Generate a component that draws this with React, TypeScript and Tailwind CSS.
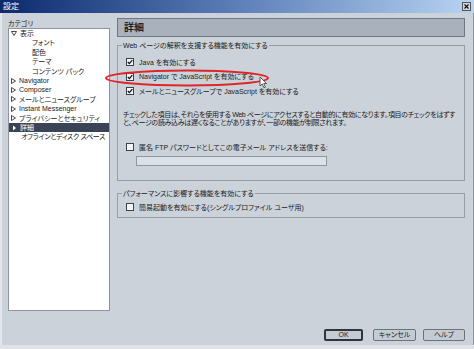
import React from "react";

type Node = { label: string; level: number; arrow?: "down" | "right"; selected?: boolean };

const tree: Node[] = [
  { label: "表示", level: 0, arrow: "down" },
  { label: "フォント", level: 1 },
  { label: "配色", level: 1 },
  { label: "テーマ", level: 1 },
  { label: "コンテンツ パック", level: 1 },
  { label: "Navigator", level: 0, arrow: "right" },
  { label: "Composer", level: 0, arrow: "right" },
  { label: "メールとニュースグループ", level: 0, arrow: "right" },
  { label: "Instant Messenger", level: 0, arrow: "right" },
  { label: "プライバシーとセキュリティ", level: 0, arrow: "right" },
  { label: "詳細", level: 0, arrow: "right", selected: true },
  { label: "オフラインとディスク スペース", level: 0 },
];

const Arrow = ({ dir, selected }: { dir: "down" | "right"; selected?: boolean }) => {
  if (selected) {
    return (
      <svg width="5" height="6" viewBox="0 0 5 6" className="shrink-0">
        <path d="M1 0.5 L4 3 L1 5.5 Z" fill="#ffffff" />
      </svg>
    );
  }
  return dir === "down" ? (
    <svg width="6" height="5" viewBox="0 0 6 5" className="shrink-0">
      <path d="M0.5 0.5 H5.5 L3 4.5 Z" fill="none" stroke="#333" strokeWidth="0.9" />
    </svg>
  ) : (
    <svg width="5" height="6" viewBox="0 0 5 6" className="shrink-0">
      <path d="M0.5 0.5 L4.5 3 L0.5 5.5 Z" fill="none" stroke="#333" strokeWidth="0.9" />
    </svg>
  );
};

const CheckBox = ({ checked }: { checked?: boolean }) => (
  <span className="w-[8px] h-[8px] border border-[#3c4249] bg-[#f2f4f6] flex items-center justify-center shrink-0">
    {checked && (
      <svg width="6" height="6" viewBox="0 0 6 6">
        <path d="M0.8 3 L2.4 4.6 L5.3 1.2" fill="none" stroke="#111" strokeWidth="1.3" />
      </svg>
    )}
  </span>
);

const CheckRow = ({ checked, children }: { checked?: boolean; children: React.ReactNode }) => (
  <div className="flex items-center gap-[5px] h-[9px] leading-[9px] ml-[8px]">
    <CheckBox checked={checked} />
    <span className="whitespace-nowrap">{children}</span>
  </div>
);

const Btn = ({ w, primary, children }: { w: string; primary?: boolean; children: React.ReactNode }) => (
  <button
    className={
      "h-[12px] rounded-[2px] bg-[#c4cbd3] text-[7px] leading-[10px] text-[#222] flex items-center justify-center " +
      w +
      (primary ? " border-2 border-[#2f343a]" : " border border-[#6b727b]")
    }
  >
    {children}
  </button>
);

export default function App() {
  return (
    <div
      className="relative w-[474px] h-[349px] overflow-hidden bg-[#cbd2da] text-[#1b1b1b] text-[7px] [font-feature-settings:'palt']"
      style={{ fontFamily: '"Liberation Sans", "Noto Sans CJK JP", sans-serif' }}
    >
      {/* title bar */}
      <div className="h-[13px] flex items-center justify-between px-[3px] bg-gradient-to-r from-[#0c2a6e] via-[#5d7fb8] to-[#b8d4f2]">
        <span className="text-white text-[8px] leading-[10px]">設定</span>
        <span className="w-[9px] h-[9px] bg-[#d4d8dd] border border-[#555] flex items-center justify-center">
          <svg width="5" height="5" viewBox="0 0 5 5">
            <path d="M0.5 0.5 L4.5 4.5 M4.5 0.5 L0.5 4.5" stroke="#111" strokeWidth="1.2" />
          </svg>
        </span>
      </div>

      <div className="flex h-[332px] border-l-[2px] border-[#e3e7eb]">
        {/* left column */}
        <div className="w-[108px] pl-[6px] pt-[6px] flex flex-col">
          <div className="h-[9px] leading-[9px]">カテゴリ</div>
          <div className="h-[283px] bg-white border border-[#8d949c] overflow-hidden">
            {tree.map((n) => (
              <div
                key={n.label}
                className={
                  "h-[9.4px] leading-[9.4px] flex items-center whitespace-nowrap " +
                  (n.selected ? "bg-[#3b4456] text-white" : "")
                }
              >
                {n.level === 1 ? (
                  <span className="ml-[23px]">{n.label}</span>
                ) : n.arrow ? (
                  <>
                    <span className={n.selected ? "ml-[3px] mr-[3px]" : "ml-[2px] mr-[3px]"}>
                      <Arrow dir={n.arrow} selected={n.selected} />
                    </span>
                    <span>{n.label}</span>
                  </>
                ) : (
                  <span className="ml-[12px] tracking-[-0.3px]">{n.label}</span>
                )}
              </div>
            ))}
          </div>
        </div>

        {/* right column */}
        <div className="w-[348px] ml-[7px] pt-[5px] flex flex-col">
          <div className="h-[19px] bg-[#a9b2bc] border border-[#6f7883] flex items-center pl-[6px]">
            <span className="font-bold text-[10px] leading-[12px] text-[#1e2228]">詳細</span>
          </div>

          <fieldset className="mt-[4px] min-w-0 w-full border border-[#959ea8] pb-[14px]">
            <legend className="ml-[4px] px-[1px] h-[9px] leading-[9px]">Web ページの解釈を支援する機能を有効にする</legend>
            <div className="flex flex-col gap-[5.5px] mt-[7.5px]">
              <CheckRow checked>Java を有効にする</CheckRow>
              <CheckRow checked>Navigator で JavaScript を有効にする</CheckRow>
              <CheckRow checked>メールとニュースグループで JavaScript を有効にする</CheckRow>
            </div>
            <p className="mt-[15.5px] ml-[5px] leading-[8px] whitespace-nowrap tracking-[-0.33px]">
              チェックした項目は、それらを使用する Web ページにアクセスすると自動的に有効になります。項目のチェックをはずす
              <br />
              と、ページの読み込みは遅くなることがありますが、一部の機能が制限されます。
            </p>
            <div className="mt-[15.5px]">
              <CheckRow>匿名 FTP パスワードとしてこの電子メール アドレスを送信する:</CheckRow>
            </div>
            <div className="mt-[4.5px] ml-[18px] w-[191px] h-[10px] bg-[#dce1e7] border border-[#8e969f]" />
          </fieldset>

          <fieldset className="mt-[7.5px] min-w-0 w-full border border-[#959ea8] pb-[5.5px]">
            <legend className="ml-[4px] px-[1px] h-[9px] leading-[9px]">パフォーマンスに影響する機能を有効にする</legend>
            <div className="mt-[5px]">
              <CheckRow>簡易起動を有効にする(シングルプロファイル ユーザ用)</CheckRow>
            </div>
          </fieldset>

          <div className="mt-auto pb-[4px] flex justify-end">
            <Btn w="w-[39px]" primary>OK</Btn>
            <div className="w-[10px]" />
            <Btn w="w-[43px]">キャンセル</Btn>
            <div className="w-[7px]" />
            <Btn w="w-[42px]">ヘルプ</Btn>
          </div>
        </div>
        <div className="flex-1 border-r border-[#8e959d]" />
      </div>
      <div className="h-[4px] bg-[#dfe3e8]" />

      {/* annotation over the screenshot */}
      <svg className="absolute left-[104px] top-[68px] pointer-events-none" width="166" height="20" viewBox="0 0 166 20">
        <ellipse cx="83" cy="10" rx="81" ry="7.5" fill="none" stroke="#e0262a" strokeWidth="2" />
      </svg>
      <svg className="absolute left-[259px] top-[76px] pointer-events-none" width="9" height="13" viewBox="0 0 9 13">
        <path d="M1 1 L1 10 L3.2 8 L5 11.8 L6.4 11.1 L4.7 7.5 L7.6 7.5 Z" fill="#fff" stroke="#333" strokeWidth="0.8" />
      </svg>
    </div>
  );
}
